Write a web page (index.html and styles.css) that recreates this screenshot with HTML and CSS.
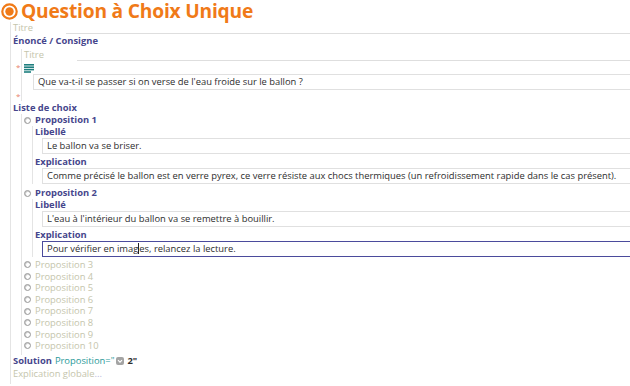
FILE: index.html
```html
<!DOCTYPE html>
<html lang="fr">
<head>
<meta charset="utf-8">
<title>Question à Choix Unique</title>
<link rel="stylesheet" href="styles.css">
</head>
<body>
<header class="head">
  <svg class="head-icon" width="17" height="17" viewBox="0 0 17 17"><circle cx="8.5" cy="8.5" r="7.2" fill="none" stroke="#f07a18" stroke-width="2.2"/><circle cx="8.5" cy="8.5" r="4.2" fill="#f07a18"/></svg>
  <h1 class="head-title">Question à Choix Unique</h1>
</header>
<div class="doc">
  <div class="row ph-row"><span class="ph">Titre</span><span class="rule"></span></div>
  <div class="row lbl">Énoncé / Consigne</div>
  <div class="sub">
    <span class="mark"></span>
    <div class="cell"><div class="row ph-row"><span class="ph">Titre</span><span class="rule"></span></div></div>
    <span class="mark req">*</span>
    <div class="cell icon-row">
      <svg width="10" height="9" viewBox="0 0 10 9"><rect x="0" y="0" width="10" height="1.6" fill="#1f7f7f"/><rect x="0" y="2.4" width="10" height="1.6" fill="#1f7f7f"/><rect x="0" y="4.8" width="10" height="1.6" fill="#1f7f7f"/><rect x="0" y="7.2" width="7" height="1.6" fill="#1f7f7f"/></svg>
    </div>
    <span class="mark"></span>
    <div class="cell"><div class="field field-q">Que va-t-il se passer si on verse de l'eau froide sur le ballon ?</div></div>
    <span class="mark req">*</span>
    <div class="cell spacer"></div>
  </div>
  <div class="row lbl list-lbl">Liste de choix</div>
  <div class="list">
    <div class="row prop"><span class="radio"></span><span class="lbl">Proposition 1</span></div>
    <div class="prop-body">
      <div class="row lbl">Libellé</div>
      <div class="field">Le ballon va se briser.</div>
      <div class="row lbl sp">Explication</div>
      <div class="field">Comme précisé le ballon est en verre pyrex, ce verre résiste aux chocs thermiques (un refroidissement rapide dans le cas présent).</div>
    </div>
    <div class="row prop prop2"><span class="radio"></span><span class="lbl">Proposition 2</span></div>
    <div class="prop-body">
      <div class="row lbl">Libellé</div>
      <div class="field">L'eau à l'intérieur du ballon va se remettre à bouillir.</div>
      <div class="row lbl sp">Explication</div>
      <div class="field active">Pour vérifier en imag<span class="caret"></span>es, relancez la lecture.</div>
    </div>
    <div class="off-list">
      <div class="row off"><span class="radio"></span><span>Proposition 3</span></div>
      <div class="row off"><span class="radio"></span><span>Proposition 4</span></div>
      <div class="row off"><span class="radio"></span><span>Proposition 5</span></div>
      <div class="row off"><span class="radio"></span><span>Proposition 6</span></div>
      <div class="row off"><span class="radio"></span><span>Proposition 7</span></div>
      <div class="row off"><span class="radio"></span><span>Proposition 8</span></div>
      <div class="row off"><span class="radio"></span><span>Proposition 9</span></div>
      <div class="row off"><span class="radio"></span><span>Proposition 10</span></div>
    </div>
  </div>
  <div class="row sol"><span class="lbl">Solution</span><span class="attr">Proposition="</span><span class="pick"><svg width="8" height="8" viewBox="0 0 8 8"><rect x="0" y="0" width="8" height="8" rx="2" fill="#a4a4a4"/><path d="M2 3.2 L4 5.2 L6 3.2" fill="none" stroke="#ffffff" stroke-width="1.2"/></svg></span><span class="val">2"</span></div>
  <div class="row glob"><span class="ph">Explication globale</span><span class="dots">...</span></div>
</div>
</body>
</html>
```
FILE: styles.css
```css
html, body {
  margin: 0;
  padding: 0;
  background: #ffffff;
}
body {
  width: 630px;
  height: 386px;
  overflow: hidden;
  font-family: "Open Sans", "DejaVu Sans", sans-serif;
  font-size: 9.4px;
  color: #2e2e2e;
}
.head {
  height: 22px;
  display: flex;
  align-items: center;
  padding-left: 1px;
}
.head-icon {
  flex: none;
}
.head-title {
  margin: 0 0 0 3px;
  font-size: 19.2px;
  font-weight: 700;
  line-height: 20px;
  color: #f07a18;
  letter-spacing: -0.2px;
  white-space: nowrap;
}
.doc {
  margin-left: 10px;
  border-left: 1px solid #e4e4e4;
  padding-left: 2px;
  padding-bottom: 4px;
}
.row {
  height: 12px;
  line-height: 12px;
  display: flex;
  align-items: center;
  white-space: nowrap;
}
.ph {
  color: #c5c5ac;
}
.ph-row .ph {
  width: 53px;
  flex: none;
}
.rule {
  flex: 1;
  align-self: stretch;
  border-bottom: 1px solid #dedede;
}
.lbl {
  color: #46468c;
  font-weight: 700;
}
.doc > .lbl {
  margin-top: 1px;
}
.sub {
  display: grid;
  grid-template-columns: 8px 1fr;
  padding-top: 2px;
}
.mark {
  display: block;
  color: #e8826a;
  font-size: 8px;
  line-height: 10px;
  padding-left: 3px;
}
.mark.req {
  padding-top: 1px;
}
.cell {
  border-left: 1px solid #e4e4e4;
  padding-left: 2px;
}
.icon-row {
  height: 12px;
  display: flex;
  align-items: center;
  padding-top: 1px;
}
.field {
  height: 14px;
  line-height: 14px;
  border: 1px solid #e0e0e0;
  border-right: none;
  padding-left: 4px;
  margin-left: 7px;
  margin-right: -3px;
  white-space: nowrap;
  color: #2e2e2e;
}
.field-q {
  margin-left: 9px;
}
.field.active {
  border-color: #4b4b9c;
  border-right: none;
}
.caret {
  display: inline-block;
  width: 1px;
  height: 11px;
  background: #222222;
  vertical-align: -2px;
}
.spacer {
  height: 11px;
}
.list-lbl {
  margin-top: 5px;
}
.list {
  margin-left: 8px;
  border-left: 1px solid #e4e4e4;
  padding-left: 2px;
  padding-bottom: 3px;
}
.radio {
  flex: none;
  width: 5px;
  height: 5px;
  border: 1px solid #9a9a9a;
  border-radius: 50%;
  margin-right: 4px;
  background: radial-gradient(circle at 60% 60%, #ffffff 0 35%, #d0d0d0 60%);
}
.prop2 {
  margin-top: 3px;
}
.prop-body {
  margin-left: 8px;
  border-left: 1px solid #e4e4e4;
  padding-left: 2px;
}
.prop-body .lbl.sp {
  margin-top: 2px;
}
.off-list {
  margin-top: 2px;
}
.off {
  height: 11.6px;
  line-height: 11.6px;
  color: #c5c5ac;
}
.sol .lbl {
  margin-right: 3px;
}
.attr {
  color: #2a9a9a;
}
.pick {
  display: flex;
  margin: 0 3px 0 2px;
}
.val {
  font-weight: 700;
  color: #2e2e2e;
}
.glob {
  margin-top: 1px;
}
.dots {
  color: #b8b8e0;
}
```
